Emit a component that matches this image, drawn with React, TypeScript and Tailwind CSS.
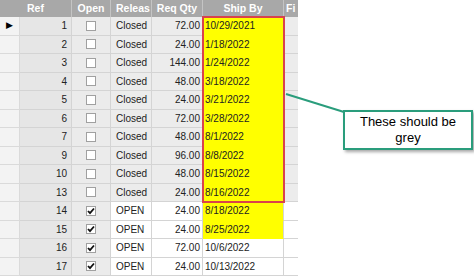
import React from "react";

type Row = { ref: number; open: boolean; qty: string; ship: string; yellow: boolean };

const rows: Row[] = [
  { ref: 1, open: false, qty: "72.00", ship: "10/29/2021", yellow: true },
  { ref: 2, open: false, qty: "24.00", ship: "1/18/2022", yellow: true },
  { ref: 3, open: false, qty: "144.00", ship: "1/24/2022", yellow: true },
  { ref: 4, open: false, qty: "48.00", ship: "3/18/2022", yellow: true },
  { ref: 5, open: false, qty: "24.00", ship: "3/21/2022", yellow: true },
  { ref: 6, open: false, qty: "72.00", ship: "3/28/2022", yellow: true },
  { ref: 7, open: false, qty: "48.00", ship: "8/1/2022", yellow: true },
  { ref: 9, open: false, qty: "96.00", ship: "8/8/2022", yellow: true },
  { ref: 10, open: false, qty: "48.00", ship: "8/15/2022", yellow: true },
  { ref: 13, open: false, qty: "24.00", ship: "8/16/2022", yellow: true },
  { ref: 14, open: true, qty: "24.00", ship: "8/18/2022", yellow: true },
  { ref: 15, open: true, qty: "24.00", ship: "8/25/2022", yellow: true },
  { ref: 16, open: true, qty: "72.00", ship: "10/6/2022", yellow: false },
  { ref: 17, open: true, qty: "24.00", ship: "10/13/2022", yellow: false },
];

const cols = "grid grid-cols-[20px_52px_39px_41px_51px_81px_14px]";

function Checkbox({ checked }: { checked: boolean }) {
  return (
    <div className="w-[10px] h-[10px] bg-white border border-[#a0a0a0] flex items-center justify-center">
      {checked && (
        <svg width="8" height="8" viewBox="0 0 8 8">
          <path d="M1 4 L3 6.2 L7 1.5" fill="none" stroke="#111" strokeWidth="1.8" />
        </svg>
      )}
    </div>
  );
}

export default function App() {
  return (
    <div
      className="relative w-[474px] h-[278px] bg-white overflow-hidden text-[10px] text-[#222]"
      style={{ fontFamily: '"Liberation Sans", Arial, sans-serif' }}
    >
      <div className="w-[298px]">
        <div className={`${cols} h-[17px] bg-[#a8a8a8] text-white font-bold text-[10.5px]`}>
          <div className="col-span-2 flex items-center justify-center border-r border-[#c4c4c4]">Ref</div>
          <div className="flex items-center justify-center border-r border-[#c4c4c4]">Open</div>
          <div className="flex items-center pl-[5px] border-r border-[#c4c4c4] overflow-hidden whitespace-nowrap">Releas</div>
          <div className="flex items-center justify-center border-r border-[#c4c4c4] whitespace-nowrap">Req Qty</div>
          <div className="flex items-center justify-center border-r border-[#c4c4c4]">Ship By</div>
          <div className="flex items-center pl-[2px] overflow-hidden">Fi</div>
        </div>
        {rows.map((r, i) => {
          const cell = r.open ? "bg-white" : "bg-[#ececec]";
          return (
            <div key={r.ref} className={`${cols} h-[18.5px]`}>
              <div className="bg-[#f3f3f3] border-r border-b border-[#dadada] flex items-center justify-center">
                {i === 0 && <span className="text-[9px] text-black">▶</span>}
              </div>
              <div className="bg-[#e6e6e6] border-r border-b border-[#d4d4d4] flex items-center justify-end pr-[4px]">
                {r.ref}
              </div>
              <div className="bg-[#ebebeb] border-r border-b border-[#d4d4d4] flex items-center justify-center">
                <Checkbox checked={r.open} />
              </div>
              <div className={`${cell} border-r border-b border-[#d4d4d4] flex items-center pl-[5px]`}>
                {r.open ? "OPEN" : "Closed"}
              </div>
              <div className={`${cell} border-r border-b border-[#d4d4d4] flex items-center justify-end pr-[2px]`}>
                {r.qty}
              </div>
              <div
                className={`${r.yellow ? "bg-[#ffff00] border-[#ffff00]" : "bg-white border-[#d4d4d4]"} border-b border-r border-r-[#d4d4d4] flex items-center pl-[2px]`}
              >
                {r.ship}
              </div>
              <div className={`${cell} border-b border-[#d4d4d4]`} />
            </div>
          );
        })}
      </div>

      {/* red highlight over closed rows */}
      <div className="absolute left-[202px] top-[16px] w-[83px] h-[187px] border-2 border-[#d9434b]" />

      {/* callout connector */}
      <svg className="absolute left-0 top-0" width="474" height="278">
        <line x1="286" y1="94" x2="344" y2="112" stroke="#2a9d7c" strokeWidth="2" />
      </svg>

      <div className="absolute left-[343px] top-[110px] w-[130px] h-[40px] bg-white border-2 border-[#2a9d7c] shadow-[2px_2px_3px_rgba(0,0,0,0.35)] flex items-center justify-center text-center text-[13px] leading-[16px] text-black">
        These should be
        <br />
        grey
      </div>
    </div>
  );
}
